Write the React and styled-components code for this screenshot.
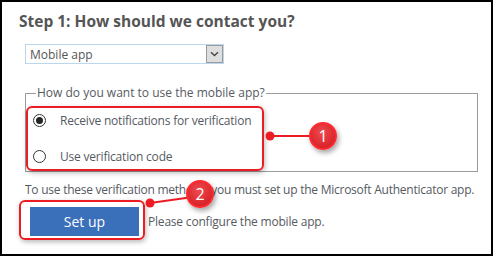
import React from 'react';
import styled, { createGlobalStyle } from 'styled-components';

const GlobalStyle = createGlobalStyle`
    html, body {
        margin: 0;
        padding: 0;
        background: #ffffff;
    }
    * {
        box-sizing: border-box;
    }
`;

const Frame = styled.div`
    position: relative;
    width: 493px;
    height: 256px;
    border: 2px solid #000000;
    background: #ffffff;
    padding: 8px 0 0 17px;
    font-family: "Open Sans", "Noto Sans", sans-serif;
    color: #555a5f;
    display: flex;
    flex-direction: column;
    overflow: hidden;
`;

const Title = styled.h2`
    margin: 0;
    font-size: 15.5px;
    font-weight: 700;
    color: #555555;
    line-height: 22px;
`;

const Select = styled.div`
    margin: 12px 0 0 6px;
    width: 199px;
    height: 20px;
    border: 1px solid #bcd6ee;
    display: flex;
    align-items: center;
    justify-content: space-between;
    font-size: 12px;
    color: #555555;
    padding-left: 4px;
`;

const SelectArrow = styled.div`
    width: 17px;
    height: 18px;
    background: #dedede;
    border: 1px solid #9a9a9a;
    display: flex;
    align-items: center;
    justify-content: center;
`;

const Fieldset = styled.fieldset`
    margin: 22px 0 0 6px;
    width: 453px;
    height: 86px;
    border: 1px solid #9c9c9c;
    padding: 0;
    min-width: 0;
`;

const Legend = styled.legend`
    margin-left: 10px;
    padding: 0 1px;
    font-size: 12px;
    line-height: 14px;
    color: #555a5f;
`;

const Highlight = styled.div`
    position: relative;
    width: ${p => p.$width}px;
    margin: ${p => p.$margin};
    padding: ${p => p.$padding};
    border: 2px solid #ec1c24;
    border-radius: 6px;
    box-shadow: 1px 2px 5px rgba(0, 0, 0, 0.28);
    display: flex;
    flex-direction: ${p => p.$column ? 'column' : 'row'};
    gap: ${p => p.$gap || 0}px;
    flex-shrink: 0;
`;

const RadioRow = styled.label`
    height: 24px;
    display: flex;
    align-items: center;
    gap: 14px;
    font-size: 12px;
    letter-spacing: -0.2px;
    white-space: nowrap;
    color: #555a5f;
`;

const RadioDot = styled.span`
    width: 13px;
    height: 13px;
    flex-shrink: 0;
    border-radius: 50%;
    border: 1px solid #333333;
    display: flex;
    align-items: center;
    justify-content: center;
    background: #ffffff;

    &::after {
        content: "";
        width: 7px;
        height: 7px;
        border-radius: 50%;
        background: ${p => p.$checked ? '#262626' : 'transparent'};
    }
`;

const Note = styled.p`
    margin: 9px 0 0 6px;
    font-size: 12px;
    letter-spacing: -0.25px;
    line-height: 18px;
    white-space: nowrap;
`;

const SetupRow = styled.div`
    margin-top: 1px;
    display: flex;
    align-items: center;
    gap: 3px;
`;

const SetupButton = styled.button`
    width: 109px;
    height: 29px;
    border: none;
    background: #3a6fb9;
    color: #ffffff;
    font-family: "Open Sans", "Noto Sans", sans-serif;
    font-size: 14px;
    padding: 0;
`;

const Hint = styled.span`
    font-size: 12px;
    letter-spacing: -0.2px;
    padding-top: 3px;
    white-space: nowrap;
`;

const Callout = styled.div`
    position: absolute;
    left: ${p => p.$x}px;
    top: ${p => p.$y}px;
    width: ${p => p.$w}px;
    height: ${p => p.$h}px;
    pointer-events: none;
`;

const Connector = styled.svg`
    position: absolute;
    left: 0;
    top: 0;
    overflow: visible;
`;

const Badge = styled.div`
    position: absolute;
    left: ${p => p.$x}px;
    top: ${p => p.$y}px;
    width: 28px;
    height: 28px;
    border-radius: 50%;
    background: radial-gradient(circle at 45% 35%, #ef4b50 0%, #dc2a30 60%, #c81c22 100%);
    border: 2px solid #ff2a2f;
    box-shadow: 2px 3px 5px rgba(0, 0, 0, 0.35);
    color: #ffffff;
    font-family: "Open Sans", "Noto Sans", sans-serif;
    font-size: 16px;
    line-height: 24px;
    text-align: center;
`;

function Chevron() {
    return (
        <svg width="9" height="6" viewBox="0 0 9 6">
            <path d="M1 1.2 L4.5 4.5 L8 1.2" fill="none" stroke="#444" strokeWidth="1.3" />
        </svg>
    );
}

export default function App() {
    return (
        <>
            <GlobalStyle />
            <Frame>
                <Title>Step 1: How should we contact you?</Title>
                <Select>
                    <span>Mobile app</span>
                    <SelectArrow><Chevron /></SelectArrow>
                </Select>
                <Fieldset>
                    <Legend>How do you want to use the mobile app?</Legend>
                    <Highlight $width={238} $margin="6px 0 0 0" $padding="0 0 1px 5px" $column $gap={12}>
                        <RadioRow><RadioDot $checked />Receive notifications for verification</RadioRow>
                        <RadioRow><RadioDot />Use verification code</RadioRow>
                    </Highlight>
                </Fieldset>
                <Note>To use these verification methods, you must set up the Microsoft Authenticator app.</Note>
                <SetupRow>
                    <Highlight $width={126} $margin="0" $padding="5px 3px 2px 9px">
                        <SetupButton>Set up</SetupButton>
                    </Highlight>
                    <Hint>Please configure the mobile app.</Hint>
                </SetupRow>

                {/* annotation 1 */}
                <Callout $x={263} $y={120} $w={80} $h={32}>
                    <Connector width="60" height="32">
                        <circle cx="5" cy="14" r="4.5" fill="#ec1c24" />
                        <line x1="5" y1="14" x2="48" y2="14" stroke="#ec1c24" strokeWidth="2" />
                    </Connector>
                    <Badge $x={44} $y={0}>1</Badge>
                </Callout>

                {/* annotation 2 */}
                <Callout $x={143} $y={178} $w={80} $h={40}>
                    <Connector width="60" height="40">
                        <circle cx="5" cy="23" r="4.5" fill="#ec1c24" />
                        <line x1="5" y1="23" x2="48" y2="17" stroke="#ec1c24" strokeWidth="2" />
                    </Connector>
                    <Badge $x={41} $y={0}>2</Badge>
                </Callout>
            </Frame>
        </>
    );
}
